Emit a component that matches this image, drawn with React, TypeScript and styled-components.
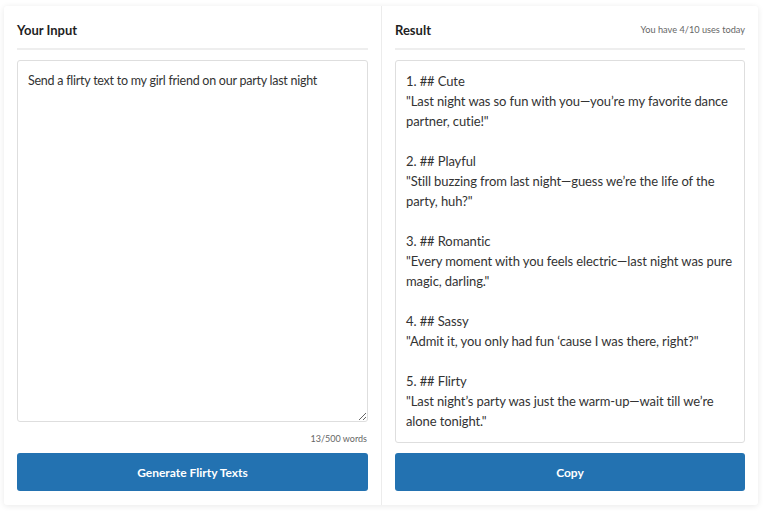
import React from "react";
import styled, { createGlobalStyle } from "styled-components";

const GlobalStyle = createGlobalStyle`
  html, body {
    margin: 0;
    padding: 0;
    background: #ffffff;
  }
  body {
    font-family: Lato, "Open Sans", Arial, sans-serif;
    color: #333;
  }
  * { box-sizing: border-box; }
`;

const Page = styled.div`
  padding: 6px 10px 9px 4px;
`;

const Card = styled.div`
  display: grid;
  grid-template-columns: 1fr 1fr;
  height: 499px;
  width: 754px;
  background: #fff;
  border-radius: 3px;
  box-shadow: 0 1px 6px rgba(0, 0, 0, 0.09);
`;

const Panel = styled.section<{ $divider?: boolean }>`
  display: flex;
  flex-direction: column;
  padding: 13px 13px 14px 13px;
  min-height: 0;
  border-left: ${(p) => (p.$divider ? "1px solid #ececec" : "none")};
`;

const Header = styled.div`
  display: flex;
  align-items: flex-start;
  justify-content: space-between;
  height: 31px;
  padding-top: 2px;
  border-bottom: 2px solid #eeeeee;
  margin-bottom: 10px;
`;

const Title = styled.h2`
  margin: 0;
  font-size: 13px;
  line-height: 18px;
  font-weight: 700;
  color: #1f1f1f;
`;

const Usage = styled.span`
  font-size: 9.2px;
  line-height: 18px;
  color: #666;
`;

const InputArea = styled.textarea`
  flex: 1;
  width: 100%;
  resize: vertical;
  border: 1px solid #dedede;
  border-radius: 3px;
  padding: 10px 10px;
  font-family: Lato, "Open Sans", Arial, sans-serif;
  font-size: 12.5px;
  letter-spacing: -0.25px;
  line-height: 20px;
  color: #333;
  outline: none;
`;

const WordCount = styled.div`
  text-align: right;
  font-size: 9px;
  color: #666;
  line-height: 14px;
  padding: 10px 1px 7px 0;
`;

const ResultBox = styled.div`
  flex: 1;
  min-height: 0;
  overflow: hidden;
  border: 1px solid #dedede;
  border-radius: 3px;
  padding: 10px 10px;
  font-size: 13px;
  letter-spacing: -0.1px;
  line-height: 20px;
  color: #333;
  white-space: pre-wrap;
`;

const ActionButton = styled.button<{ $spaced?: boolean }>`
  height: 38px;
  width: 100%;
  margin-top: ${(p) => (p.$spaced ? "10px" : "0")};
  border: none;
  border-radius: 3px;
  background: #2372b1;
  color: #fff;
  font-family: Lato, "Open Sans", Arial, sans-serif;
  font-size: 12px;
  font-weight: 700;
  cursor: pointer;
`;

const resultText = `1. ## Cute
"Last night was so fun with you—you’re my favorite dance partner, cutie!"

2. ## Playful
"Still buzzing from last night—guess we’re the life of the party, huh?"

3. ## Romantic
"Every moment with you feels electric—last night was pure magic, darling."

4. ## Sassy
"Admit it, you only had fun ‘cause I was there, right?"

5. ## Flirty
"Last night’s party was just the warm-up—wait till we’re alone tonight."`;

export default function App() {
  return (
    <Page>
      <GlobalStyle />
      <Card>
        <Panel>
          <Header>
            <Title>Your Input</Title>
          </Header>
          <InputArea defaultValue="Send a flirty text to my girl friend on our party last night" />
          <WordCount>13/500 words</WordCount>
          <ActionButton>Generate Flirty Texts</ActionButton>
        </Panel>
        <Panel $divider>
          <Header>
            <Title>Result</Title>
            <Usage>You have 4/10 uses today</Usage>
          </Header>
          <ResultBox>{resultText}</ResultBox>
          <ActionButton $spaced>Copy</ActionButton>
        </Panel>
      </Card>
    </Page>
  );
}
